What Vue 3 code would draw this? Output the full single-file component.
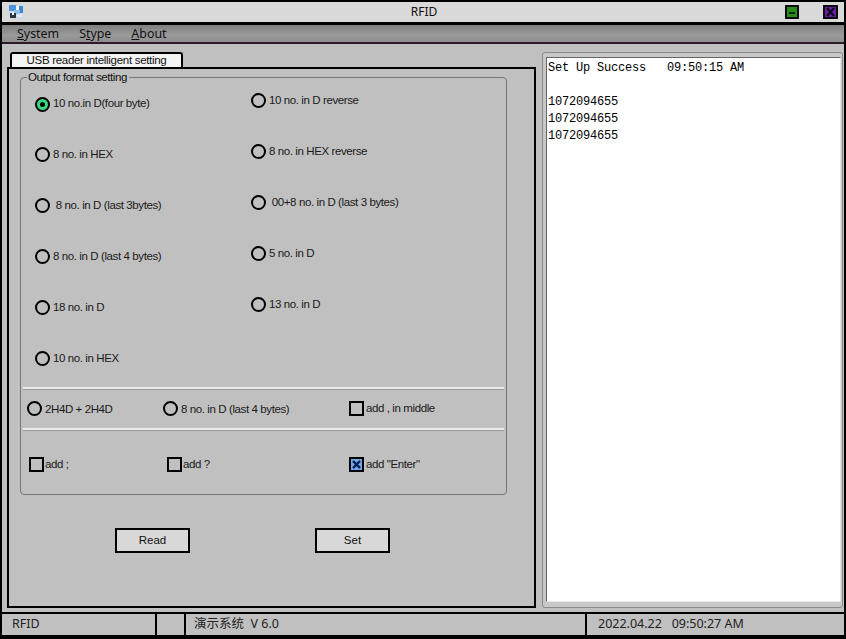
<script setup>
const leftOptions = [
  { label: '10 no.in D(four byte)', selected: true },
  { label: '8 no. in HEX' },
  { label: ' 8 no. in D (last 3bytes)' },
  { label: '8 no. in D (last 4 bytes)' },
  { label: '18 no. in D' },
  { label: '10 no. in HEX' }
]
const rightOptions = [
  '10 no. in D reverse',
  '8 no. in HEX reverse',
  ' 00+8 no. in D (last 3 bytes)',
  '5 no. in D',
  '13 no. in D'
]
const log = ['Set Up Success   09:50:15 AM', '\u00a0', '1072094655', '1072094655', '1072094655']
</script>

<template>
  <div class="window">
    <header class="title">
      <svg class="app-icon" width="14" height="13" viewBox="0 0 14 13">
        <rect width="14" height="13" fill="#cfdcec" />
        <rect x="0" y="0" width="7" height="6" fill="#4f95dc" />
        <rect x="7" y="1" width="3" height="4" fill="#f2f6fa" />
        <rect x="10" y="1" width="4" height="7" fill="#3d86cc" />
        <rect x="5" y="5" width="6" height="4" fill="#8fc0ea" />
        <rect x="1" y="8" width="6" height="5" fill="#2b3540" />
        <rect x="3" y="7" width="2" height="3" fill="#eef2f6" />
        <rect x="8" y="9" width="5" height="3" fill="#dfe8f0" />
      </svg>
      <span class="title-text">RFID</span>
      <span class="win-btn min"><i></i></span>
      <span class="win-btn close">
        <svg width="11" height="10" viewBox="0 0 11 10"><path d="M2 1l7 8M9 1l-7 8" stroke="#0c0420" stroke-width="2.2" fill="none" /></svg>
      </span>
    </header>

    <nav class="menu">
      <span><u>S</u>ystem</span>
      <span>S<u>t</u>ype</span>
      <span><u>A</u>bout</span>
    </nav>

    <main class="body">
      <section class="left">
        <div class="tab">USB reader intelligent setting</div>
        <div class="tab-page">
          <div class="group">
            <span class="legend">Output format setting</span>
            <div class="options">
              <div class="col col-left">
                <label v-for="o in leftOptions" :key="o.label" class="opt">
                  <span class="radio" :class="{ on: o.selected }"></span>
                  <span class="txt">{{ o.label }}</span>
                </label>
              </div>
              <div class="col col-right">
                <label v-for="o in rightOptions" :key="o" class="opt">
                  <span class="radio"></span>
                  <span class="txt">{{ o }}</span>
                </label>
              </div>
            </div>
            <div class="divider"></div>
            <div class="row row-a">
              <label class="opt c1"><span class="radio"></span><span class="txt">2H4D + 2H4D</span></label>
              <label class="opt c2"><span class="radio"></span><span class="txt">8 no. in D (last 4 bytes)</span></label>
              <label class="opt c3"><span class="check"></span><span class="txt">add , in middle</span></label>
            </div>
            <div class="divider"></div>
            <div class="row row-b">
              <label class="opt d1"><span class="check"></span><span class="txt">add ;</span></label>
              <label class="opt d2"><span class="check"></span><span class="txt">add ?</span></label>
              <label class="opt d3"><span class="check on">
                <svg width="11" height="11" viewBox="0 0 11 11"><path d="M2 2l7 7M9 2l-7 7" stroke="#0a1a50" stroke-width="2.4" fill="none" /></svg>
              </span><span class="txt">add "Enter"</span></label>
            </div>
          </div>
          <div class="actions">
            <button class="btn">Read</button>
            <button class="btn">Set</button>
          </div>
        </div>
      </section>

      <section class="right">
        <div class="log">
          <div v-for="(l, i) in log" :key="i" class="log-line">{{ l }}</div>
        </div>
      </section>
    </main>

    <footer class="status">
      <div class="cell s1">RFID</div>
      <div class="cell s2"></div>
      <div class="cell s3">演示系统&nbsp; V 6.0</div>
      <div class="cell s4">2022.04.22&nbsp;&nbsp; 09:50:27 AM</div>
    </footer>
  </div>
</template>

<style scoped>
.window {
  width: 846px;
  height: 639px;
  box-sizing: border-box;
  background: #000;
  padding: 2px 2px 4px 2px;
  display: flex;
  flex-direction: column;
  font-family: "Liberation Sans", Arial, sans-serif;
  font-size: 11.5px;
  color: #111;
  overflow: hidden;
}
.title {
  height: 20px;
  flex: none;
  background: #d9d9d9;
  display: flex;
  align-items: center;
  position: relative;
}
.app-icon { position: absolute; left: 7px; top: 3px; }
.title-text {
  flex: 1;
  text-align: center;
  font-family: "Noto Sans", sans-serif;
  font-size: 12px;
  padding: 0 0 2px 2px;
}
.win-btn {
  position: absolute;
  top: 3px;
  height: 14px;
  box-sizing: border-box;
  border: 2px solid #0a0a0a;
}
.min { left: 783px; width: 14px; background: #2f8a1e; }
.min i {
  position: absolute;
  left: 2px;
  right: 2px;
  top: 5px;
  height: 2px;
  background: #062a06;
}
.close {
  left: 821px;
  width: 15px;
  background: #6b1ea0;
  display: flex;
  align-items: center;
  justify-content: center;
}
.menu {
  margin-top: 3px;
  height: 17px;
  flex: none;
  background: linear-gradient(#7f7f7f, #9a9a9a 60%, #8f8f8f);
  border-bottom: 2px solid #2a1a2a;
  display: flex;
  align-items: center;
  padding-left: 15px;
  gap: 20px;
  font-family: "Noto Sans", sans-serif;
  font-size: 12.4px;
  color: #111;
}
.body {
  flex: 1;
  min-height: 0;
  background: #c0c0c0;
  display: flex;
  padding: 8px 0 4px 5px;
}
.left {
  width: 529px;
  flex: none;
  display: flex;
  flex-direction: column;
}
.tab {
  margin-left: 3px;
  width: 173px;
  height: 15px;
  box-sizing: border-box;
  background: #f4f4f4;
  border: 2px solid #000;
  border-bottom: 0;
  border-radius: 3px 3px 0 0;
  text-align: center;
  line-height: 13px;
  letter-spacing: -0.3px;
}
.tab-page {
  flex: 1;
  border: 2px solid #000;
  box-sizing: border-box;
  padding: 8px 0 0 11px;
  display: flex;
  flex-direction: column;
}
.group {
  position: relative;
  width: 487px;
  height: 418px;
  box-sizing: border-box;
  border: 1px solid #777;
  border-radius: 4px;
}
.legend {
  position: absolute;
  left: 6px;
  top: -7px;
  background: #c0c0c0;
  padding: 0 2px 0 1px;
  line-height: 13px;
  letter-spacing: -0.4px;
}
.options {
  height: 309px;
  display: flex;
}
.col { display: flex; flex-direction: column; }
.col-left { width: 230px; padding: 18px 0 0 14px; box-sizing: border-box; gap: 35px; }
.col-left .opt:first-child { margin-bottom: -1px; }
.col-left .opt:first-child .txt { top: -1px; }
.col-right { padding: 14px 0 0 0; gap: 35px; }
.opt {
  display: flex;
  align-items: center;
  height: 16px;
  gap: 3px;
}
.txt { white-space: pre; letter-spacing: -0.4px; color: #1a1a1a; position: relative; }
.c3 .txt { top: -1px; }
.radio {
  width: 15px;
  height: 15px;
  flex: none;
  box-sizing: border-box;
  border: 2px solid #000;
  border-radius: 50%;
  position: relative;
}
.radio.on { background: #34d982; }
.radio.on::after {
  content: "";
  position: absolute;
  left: 3px;
  top: 3px;
  width: 5px;
  height: 5px;
  border-radius: 50%;
  background: #000;
}
.check {
  width: 15px;
  height: 15px;
  flex: none;
  box-sizing: border-box;
  border: 2px solid #000;
  display: flex;
  align-items: center;
  justify-content: center;
}
.check.on { background: #6ea8e6; }
.divider {
  margin: 0 2px;
  height: 2px;
  background: #ececec;
  box-shadow: 0 1px 0 #999;
}
.row { display: flex; align-items: center; }
.row-a { height: 39px; }
.row-b { height: 65px; padding-top: 3px; box-sizing: border-box; }
.c1 { margin-left: 6px; width: 136px; }
.c2 { width: 186px; }
.c3 { gap: 2px; }
.d1 { margin-left: 8px; width: 138px; gap: 1px; }
.d2 { width: 182px; gap: 1px; }
.d3 { gap: 2px; }
.actions {
  display: flex;
  padding: 33px 0 0 95px;
  gap: 125px;
}
.btn {
  width: 75px;
  height: 25px;
  box-sizing: border-box;
  background: #d8d8d8;
  border: 2px solid #000;
  padding: 0 0 1px;
  font: 11.5px "Liberation Sans", Arial, sans-serif;
  color: #111;
}
.right {
  margin-left: 6px;
  width: 301px;
  flex: none;
  box-sizing: border-box;
  border: 1px solid #8a8a8a;
  border-radius: 3px;
  padding: 4px 1px 5px 3px;
  background: #c8c8c8;
  display: flex;
}
.log {
  flex: 1;
  background: #fff;
  box-sizing: border-box;
  border-top: 1px solid #666;
  border-left: 1px solid #666;
  border-right: 1px solid #e6e6e6;
  border-bottom: 1px solid #e6e6e6;
  padding: 2px 0 0 1px;
}
.log-line {
  font-family: "Liberation Mono", monospace;
  font-size: 12px;
  letter-spacing: -0.2px;
  line-height: 17px;
  white-space: pre;
  color: #000;
}
.status {
  flex: none;
  height: 21px;
  display: flex;
  gap: 2px;
  border-top: 2px solid #000;
  box-sizing: content-box;
  font-family: "Noto Sans", "Noto Sans CJK SC", sans-serif;
  font-size: 12.5px;
  color: #222;
}
.cell {
  background: #c0c0c0;
  height: 21px;
  line-height: 20px;
  box-sizing: border-box;
  white-space: nowrap;
}
.s1 { width: 153px; padding-left: 10px; }
.s2 { width: 27px; }
.s3 { width: 399px; padding-left: 8px; }
.s4 { flex: 1; padding-left: 11px; }
</style>
